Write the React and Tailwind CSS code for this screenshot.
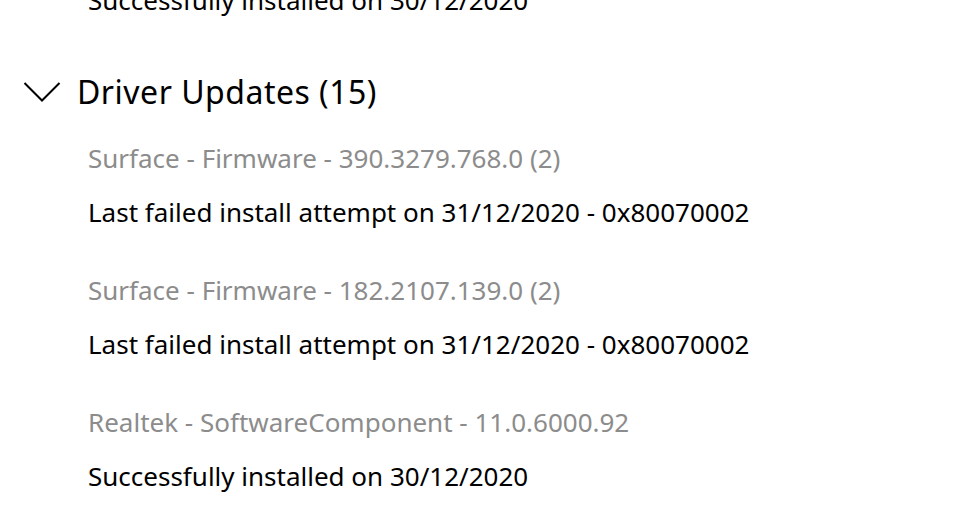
import React from 'react';

const items = [
  { title: 'Surface - Firmware - 390.3279.768.0 (2)', status: 'Last failed install attempt on 31/12/2020 - 0x80070002' },
  { title: 'Surface - Firmware - 182.2107.139.0 (2)', status: 'Last failed install attempt on 31/12/2020 - 0x80070002' },
  { title: 'Realtek - SoftwareComponent - 11.0.6000.92', status: 'Successfully installed on 30/12/2020' },
];

const Chevron = () => (
  <svg width="38" height="22" viewBox="0 0 38 22" fill="none" className="shrink-0">
    <path d="M1.5 2 L19 19.5 L36.5 2" stroke="#000" strokeWidth="2" />
  </svg>
);

export default function App() {
  return (
    <div className="w-[966px] h-[517px] overflow-hidden bg-white text-black font-['Noto_Sans','Segoe_UI',sans-serif]">
      <div className="-mt-[16px] pl-[88px] text-[26px] leading-[32px]">Successfully installed on 30/12/2020</div>

      <div className="mt-[54px] flex items-center gap-[16px] pl-[23px] h-[44px]">
        <Chevron />
        <span className="text-[32px] leading-[44px] tracking-[0.5px]">Driver Updates (15)</span>
      </div>

      <ul className="mt-[28px] pl-[88px] flex flex-col gap-[46px]">
        {items.map((it, idx) => (
          <li key={idx} className="flex flex-col gap-[22px] text-[26px] leading-[32px]">
            <span className="text-[#8c8c8c]">{it.title}</span>
            <span>{it.status}</span>
          </li>
        ))}
      </ul>
    </div>
  );
}
